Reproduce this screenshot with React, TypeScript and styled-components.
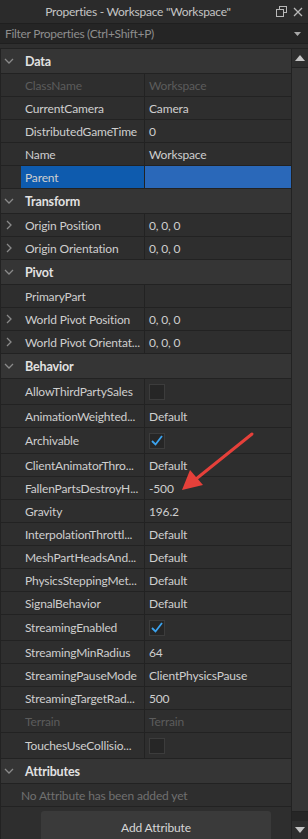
import React from 'react';
import styled, { createGlobalStyle } from 'styled-components';

const GlobalStyle = createGlobalStyle`
  html, body {
    margin: 0;
    padding: 0;
    background: #2e2e2e;
  }
  * {
    box-sizing: border-box;
  }
`;

const Panel = styled.div`
  position: relative;
  width: 308px;
  height: 839px;
  overflow: hidden;
  display: flex;
  flex-direction: column;
  background: #2e2e2e;
  font-family: 'Lato', 'Liberation Sans', sans-serif;
  font-size: 12px;
  letter-spacing: -0.15px;
  color: #cccccc;
`;

const TitleBar = styled.div`
  height: 23px;
  display: flex;
  align-items: center;
  background: #2b2b2b;
`;

const Title = styled.div`
  flex: 1;
  text-align: center;
  color: #c4c4c4;
  font-size: 12px;
  letter-spacing: -0.25px;
`;

const TitleIcons = styled.div`
  display: flex;
  align-items: center;
  gap: 6px;
  padding-right: 5px;
`;

const FilterBar = styled.div`
  height: 21px;
  display: flex;
  align-items: center;
  justify-content: space-between;
  padding: 0 7px 0 5px;
  background: #252525;
  border-top: 1px solid #1f1f1f;
  border-bottom: 1px solid #1f1f1f;
  color: #8e8e8e;
  letter-spacing: -0.3px;
`;

const Spacer = styled.div`
  height: 4px;
`;

const Body = styled.div`
  flex: 1;
  display: flex;
  min-height: 0;
  border-top: 1px solid #222222;
`;

const List = styled.div`
  flex: 1;
  display: flex;
  flex-direction: column;
  border-left: 1px solid #222222;
`;

const HeaderRow = styled.div`
  height: 25px;
  flex-shrink: 0;
  display: flex;
  align-items: center;
  background: #353535;
  border-bottom: 1px solid #222222;
  font-weight: 700;
  font-size: 12.5px;
  color: #e2e2e2;
`;

const Gutter = styled.div`
  width: 24px;
  height: 100%;
  flex-shrink: 0;
  display: flex;
  align-items: center;
  justify-content: center;
  padding-right: 8px;
`;

const Row = styled.div<{ $h: number }>`
  height: ${p => p.$h}px;
  flex-shrink: 0;
  display: flex;
  border-bottom: 1px solid #222222;
`;

const LabelCell = styled.div<{ $sel?: boolean; $dim?: boolean }>`
  width: 124px;
  flex-shrink: 0;
  display: flex;
  align-items: center;
  margin-left: -4px;
  padding-left: 4px;
  white-space: nowrap;
  overflow: hidden;
  background: ${p => (p.$sel ? '#0e5bae' : 'transparent')};
  color: ${p => (p.$dim ? '#5c5c5c' : '#cfcfcf')};
  border-right: 1px solid #222222;
`;

const ValueCell = styled.div<{ $sel?: boolean; $dim?: boolean }>`
  flex: 1;
  display: flex;
  align-items: center;
  padding-left: 4px;
  white-space: nowrap;
  overflow: hidden;
  background: ${p => (p.$sel ? '#2a68b9' : 'transparent')};
  color: ${p => (p.$dim ? '#5c5c5c' : '#cfcfcf')};
`;

const Check = styled.div`
  width: 16px;
  height: 16px;
  background: #262626;
  border: 1px solid #3c3c3c;
  display: flex;
  align-items: center;
  justify-content: center;
`;

const EmptyNote = styled.div`
  height: 23px;
  flex-shrink: 0;
  display: flex;
  align-items: center;
  padding-left: 20px;
  color: #707070;
  border-bottom: 1px solid #222222;
`;

const ButtonWrap = styled.div`
  display: flex;
  justify-content: center;
  padding: 4px 20px 0 40px;
`;

const AddButton = styled.div`
  width: 230px;
  height: 40px;
  border-radius: 3px;
  background: #3a3a3a;
  color: #d6d6d6;
  display: flex;
  justify-content: center;
  padding-top: 9px;
`;

const ScrollBar = styled.div`
  width: 17px;
  flex-shrink: 0;
  display: flex;
  flex-direction: column;
  background: #262626;
  border-left: 1px solid #222222;
`;

const ScrollButton = styled.div`
  height: 18px;
  flex-shrink: 0;
  display: flex;
  align-items: center;
  justify-content: center;
  background: #2e2e2e;
`;

const Thumb = styled.div`
  height: 745px;
  flex-shrink: 0;
  background: #353535;
  border-top: 1px solid #222222;
  border-bottom: 1px solid #222222;
`;

const Track = styled.div`
  flex: 1;
`;

const Annotation = styled.svg`
  position: absolute;
  left: 0;
  top: 0;
  pointer-events: none;
`;

const ChevronDown = () => (
  <svg width="10" height="6" viewBox="0 0 10 6">
    <path d="M1 1 L5 5 L9 1" fill="none" stroke="#8a8a8a" strokeWidth="1.3" />
  </svg>
);

const ChevronRight = () => (
  <svg width="6" height="10" viewBox="0 0 6 10">
    <path d="M1 1 L5 5 L1 9" fill="none" stroke="#8a8a8a" strokeWidth="1.3" />
  </svg>
);

const Tick = () => (
  <svg width="12" height="11" viewBox="0 0 12 11">
    <path d="M1 6 L4.5 9.5 L11 1" fill="none" stroke="#3ba3ef" strokeWidth="1.8" />
  </svg>
);

type Prop = {
  label: string;
  value?: string;
  check?: boolean;
  expand?: boolean;
  dim?: boolean;
  sel?: boolean;
};

type Section = { title: string; props: Prop[] };

const sections: Section[] = [
  {
    title: 'Data',
    props: [
      { label: 'ClassName', value: 'Workspace', dim: true },
      { label: 'CurrentCamera', value: 'Camera' },
      { label: 'DistributedGameTime', value: '0' },
      { label: 'Name', value: 'Workspace' },
      { label: 'Parent', value: '', sel: true },
    ],
  },
  {
    title: 'Transform',
    props: [
      { label: 'Origin Position', value: '0, 0, 0', expand: true },
      { label: 'Origin Orientation', value: '0, 0, 0', expand: true },
    ],
  },
  {
    title: 'Pivot',
    props: [
      { label: 'PrimaryPart', value: '' },
      { label: 'World Pivot Position', value: '0, 0, 0', expand: true },
      { label: 'World Pivot Orientat...', value: '0, 0, 0', expand: true },
    ],
  },
  {
    title: 'Behavior',
    props: [
      { label: 'AllowThirdPartySales', check: false },
      { label: 'AnimationWeighted...', value: 'Default' },
      { label: 'Archivable', check: true },
      { label: 'ClientAnimatorThro...', value: 'Default' },
      { label: 'FallenPartsDestroyH...', value: '-500' },
      { label: 'Gravity', value: '196.2' },
      { label: 'InterpolationThrottl...', value: 'Default' },
      { label: 'MeshPartHeadsAnd...', value: 'Default' },
      { label: 'PhysicsSteppingMet...', value: 'Default' },
      { label: 'SignalBehavior', value: 'Default' },
      { label: 'StreamingEnabled', check: true },
      { label: 'StreamingMinRadius', value: '64' },
      { label: 'StreamingPauseMode', value: 'ClientPhysicsPause' },
      { label: 'StreamingTargetRad...', value: '500' },
      { label: 'Terrain', value: 'Terrain', dim: true },
      { label: 'TouchesUseCollisio...', check: false },
    ],
  },
];

const PropRow: React.FC<{ p: Prop }> = ({ p }) => (
  <Row $h={p.check !== undefined ? 26 : 23}>
    <Gutter>{p.expand && <ChevronRight />}</Gutter>
    <LabelCell $sel={p.sel} $dim={p.dim}>{p.label}</LabelCell>
    <ValueCell $sel={p.sel} $dim={p.dim}>
      {p.check !== undefined ? <Check>{p.check && <Tick />}</Check> : p.value}
    </ValueCell>
  </Row>
);

const App: React.FC = () => (
  <Panel>
    <GlobalStyle />
    <TitleBar>
      <Title>Properties - Workspace "Workspace"</Title>
      <TitleIcons>
        <svg width="11" height="11" viewBox="0 0 11 11">
          <rect x="3.5" y="0.5" width="7" height="6" fill="none" stroke="#b8b8b8" />
          <rect x="0.5" y="3.5" width="7" height="7" fill="#2b2b2b" stroke="#b8b8b8" />
        </svg>
        <svg width="10" height="10" viewBox="0 0 10 10">
          <path d="M1 1 L9 9 M9 1 L1 9" stroke="#b8b8b8" strokeWidth="1.3" />
        </svg>
      </TitleIcons>
    </TitleBar>
    <FilterBar>
      <span>Filter Properties (Ctrl+Shift+P)</span>
      <svg width="7" height="4" viewBox="0 0 7 4">
        <path d="M0 0 L7 0 L3.5 4 Z" fill="#a8a8a8" />
      </svg>
    </FilterBar>
    <Spacer />
    <Body>
      <List>
        {sections.map(s => (
          <React.Fragment key={s.title}>
            <HeaderRow>
              <Gutter>
                <ChevronDown />
              </Gutter>
              {s.title}
            </HeaderRow>
            {s.props.map(p => (
              <PropRow key={p.label} p={p} />
            ))}
          </React.Fragment>
        ))}
        <HeaderRow>
          <Gutter>
            <ChevronDown />
          </Gutter>
          Attributes
        </HeaderRow>
        <EmptyNote>No Attribute has been added yet</EmptyNote>
        <ButtonWrap>
          <AddButton>Add Attribute</AddButton>
        </ButtonWrap>
      </List>
      <ScrollBar>
        <ScrollButton>
          <svg width="10" height="6" viewBox="0 0 10 6">
            <path d="M0 6 L10 6 L5 0 Z" fill="#c4c4c4" />
          </svg>
        </ScrollButton>
        <Thumb />
        <Track />
        <ScrollButton>
          <svg width="10" height="6" viewBox="0 0 10 6">
            <path d="M0 0 L10 0 L5 6 Z" fill="#c4c4c4" />
          </svg>
        </ScrollButton>
      </ScrollBar>
    </Body>
    <Annotation width="308" height="839" viewBox="0 0 308 839">
      <path d="M252 434 L196 479" stroke="#e5403a" strokeWidth="3" strokeLinecap="round" />
      <path d="M182 490 L190 470 L203 485 Z" fill="#e5403a" />
    </Annotation>
  </Panel>
);

export default App;
